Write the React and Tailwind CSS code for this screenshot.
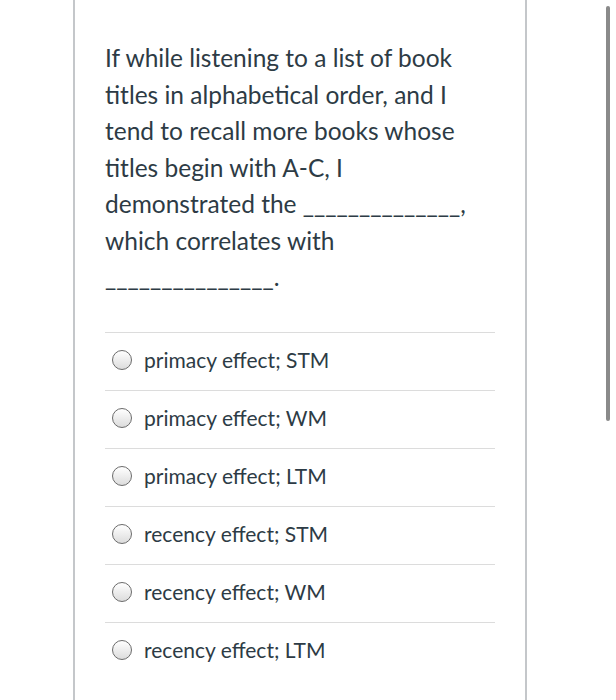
const options = [
  'primacy effect; STM',
  'primacy effect; WM',
  'primacy effect; LTM',
  'recency effect; STM',
  'recency effect; WM',
  'recency effect; LTM',
];

export default function App() {
  return (
    <div className="relative h-[700px] w-[616px] overflow-hidden bg-white font-['Lato','Liberation_Sans',sans-serif] text-[#2d3b45]">
      <div className="ml-[73px] h-full w-[454px] border-x-2 border-[#c4c7ca] px-[30px] pt-[40px]">
        <p className="text-[24.5px] leading-[36.5px]">
          If while listening to a list of book
          <br />
          titles in alphabetical order, and I
          <br />
          tend to recall more books whose
          <br />
          titles begin with A-C, I
          <br />
          demonstrated the ______________,
          <br />
          which correlates with
          <br />
          _______________.
        </p>
        <div className="mt-[36px]">
          {options.map((o) => (
            <div key={o} className="flex h-[58px] items-center border-t border-[#dcdcdc] pb-[3px] pl-[7px]">
              <span className="h-[20px] w-[20px] shrink-0 rounded-full border-[1.5px] border-[#6b6b6b] bg-gradient-to-b from-[#ffffff] to-[#dcdcdc]" />
              <span className="ml-[12px] text-[21px] leading-[28px]">{o}</span>
            </div>
          ))}
        </div>
      </div>
      <div className="absolute left-[606px] top-[6px] h-[415px] w-[4px] rounded-full bg-[#8a8a8a]" />
    </div>
  );
}
